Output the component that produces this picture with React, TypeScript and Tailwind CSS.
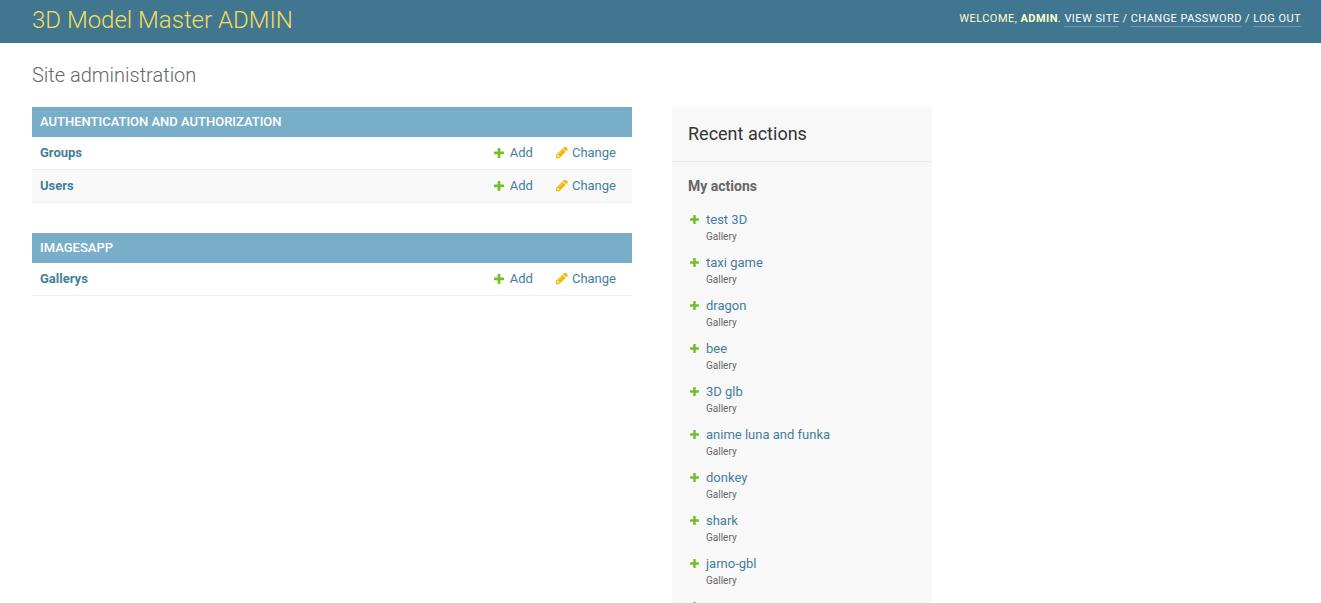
import React from "react";

const PLUS =
  "M1600 796v192q0 40-28 68t-68 28h-416v416q0 40-28 68t-68 28h-192q-40 0-68-28t-28-68v-416h-416q-40 0-68-28t-28-68v-192q0-40 28-68t68-28h416v-416q0-40 28-68t68-28h192q40 0 68 28t28 68v416h416q40 0 68 28t28 68z";
const PENCIL =
  "M491 1536l91-91-235-235-91 91v107h128v128h107zm523-928q0-22-22-22-10 0-17 7l-542 542q-7 7-7 17 0 22 22 22 10 0 17-7l542-542q7-7 7-17zm-54-192l416 416-832 832h-416v-416zm683 96q0 53-37 90l-166 166-416-416 166-165q36-38 90-38 53 0 91 38l235 234q37 39 37 91z";

function PlusIcon({ size }: { size: number }) {
  return (
    <svg width={size} height={size} viewBox="192 192 1408 1408" className="shrink-0">
      <path d={PLUS} fill="#70bf2b" />
    </svg>
  );
}

function PencilIcon() {
  return (
    <svg width={12} height={12} viewBox="128 224 1544 1544" className="shrink-0">
      <path d={PENCIL} fill="#efb80b" />
    </svg>
  );
}

type Model = { name: string };

function AppModule({ title, models }: { title: string; models: Model[] }) {
  return (
    <div className="mb-[30px]">
      <div className="h-[30px] px-2 flex items-center bg-[#79aec8] text-white text-[13px] font-medium uppercase">
        {title}
      </div>
      {models.map((m, i) => (
        <div
          key={m.name}
          className={`h-[33px] flex items-center border-b border-[#eee] text-[13px] ${
            i % 2 === 1 ? "bg-[#f9f9f9]" : "bg-white"
          }`}
        >
          <a className="flex-1 px-2 font-bold text-[#447e9b]">{m.name}</a>
          <a className="flex items-center gap-[6px] text-[#447e9b] pr-[23px]">
            <PlusIcon size={10} />
            Add
          </a>
          <a className="flex items-center gap-[4px] text-[#447e9b] pr-4">
            <PencilIcon />
            Change
          </a>
        </div>
      ))}
    </div>
  );
}

const actions = [
  "test 3D",
  "taxi game",
  "dragon",
  "bee",
  "3D glb",
  "anime luna and funka",
  "donkey",
  "shark",
  "jarno-gbl",
];

export default function App() {
  return (
    <div className="min-h-screen bg-white text-[#333] font-['Roboto','Lucida_Grande',Verdana,Arial,sans-serif]">
      <header className="h-[43px] bg-[#417690] flex items-center justify-between pl-8 pr-5">
        <h1 className="text-[24px] font-light text-[#f5dd5d] leading-none -mt-1">3D Model Master ADMIN</h1>
        <div className="text-[11px] uppercase tracking-[0.45px] text-[#ffc] -mt-[5px]">
          Welcome, <strong className="font-bold">admin</strong>.{" "}
          <a className="text-white border-b border-white/25 pb-[1px]">View site</a> /{" "}
          <a className="text-white border-b border-white/25 pb-[1px]">Change password</a> /{" "}
          <a className="text-white border-b border-white/25 pb-[1px]">Log out</a>
        </div>
      </header>

      <div className="px-8 pt-[20px]">
        <h1 className="text-[20px] font-light text-[#666] leading-[24px] mb-[20px]">Site administration</h1>
        <div className="flex items-start gap-10">
          <div className="w-[600px]">
            <AppModule title="Authentication and Authorization" models={[{ name: "Groups" }, { name: "Users" }]} />
            <AppModule title="Imagesapp" models={[{ name: "Gallerys" }]} />
          </div>
          <div className="w-[260px] bg-[#f8f8f8] h-[496px] overflow-hidden">
            <h2 className="text-[18px] leading-[22px] text-[#333] p-4 border-b border-[#eaeaea]">Recent actions</h2>
            <h3 className="text-[14px] leading-[16px] font-bold text-[#666] px-4 mt-4 mb-[17px]">My actions</h3>
            <ul className="px-4">
              {actions.map((a) => (
                <li key={a} className="mb-[10px] flex gap-[7px]">
                  <div className="pt-[4px] pl-[2px]">
                    <PlusIcon size={9} />
                  </div>
                  <div>
                    <a className="block text-[13px] leading-[18px] text-[#447e9b]">{a}</a>
                    <span className="block text-[10px] leading-[15px] text-[#666]">Gallery</span>
                  </div>
                </li>
              ))}
              <li className="flex pl-[2px] pt-[4px]">
                <PlusIcon size={9} />
              </li>
            </ul>
          </div>
        </div>
      </div>
    </div>
  );
}
